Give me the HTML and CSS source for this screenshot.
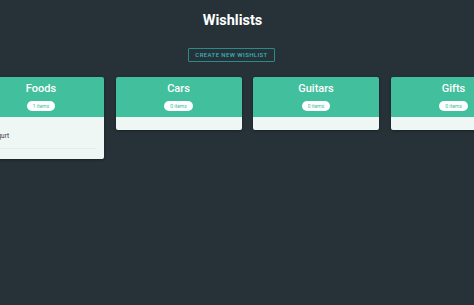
FILE: index.html
```html
<!DOCTYPE html>
<html>
<head>
<meta charset="utf-8">
<link rel="stylesheet" href="styles.css">
</head>
<body>
<div class="page">
  <h1 class="title">Wishlists</h1>
  <div class="actions"><button class="btn-create">Create new wishlist</button></div>
  <div class="cards">
    <div class="card">
      <div class="card-head">
        <div class="card-title">Foods</div>
        <span class="pill">1 items</span>
      </div>
      <div class="card-body">
        <ul class="items"><li class="item">Yogurt</li></ul>
      </div>
    </div>
    <div class="card">
      <div class="card-head">
        <div class="card-title">Cars</div>
        <span class="pill">0 items</span>
      </div>
      <div class="card-body"></div>
    </div>
    <div class="card">
      <div class="card-head">
        <div class="card-title">Guitars</div>
        <span class="pill">0 items</span>
      </div>
      <div class="card-body"></div>
    </div>
    <div class="card">
      <div class="card-head">
        <div class="card-title">Gifts</div>
        <span class="pill">0 items</span>
      </div>
      <div class="card-body"></div>
    </div>
  </div>
</div>
</body>
</html>
```
FILE: styles.css
```css
html, body {
  margin: 0;
  padding: 0;
  background: #263238;
  font-family: Roboto, "Liberation Sans", sans-serif;
  overflow: hidden;
}
.page {
  width: 474px;
  height: 305px;
  overflow: hidden;
}
.title {
  margin: 0;
  padding: 11px 9px 0 0;
  text-align: center;
  color: #ffffff;
  font-size: 14.5px;
  line-height: 19px;
  font-weight: 700;
}
.actions {
  display: flex;
  justify-content: center;
  margin-top: 18px;
  padding-right: 11px;
}
.btn-create {
  width: 87px;
  height: 14px;
  padding: 0;
  background: transparent;
  border: 1px solid #2a8c88;
  border-radius: 1px;
  color: #37b3bf;
  font-family: Roboto, "Liberation Sans", sans-serif;
  font-size: 6px;
  font-weight: 500;
  letter-spacing: 0.4px;
  text-transform: uppercase;
  line-height: 12px;
}
.cards {
  display: flex;
  align-items: flex-start;
  gap: 11.5px;
  margin-top: 15px;
  margin-left: -22px;
}
.card {
  flex: 0 0 126px;
  width: 126px;
  border-radius: 2px;
  overflow: hidden;
  box-shadow: 0 1px 3px rgba(0,0,0,0.35);
}
.card-head {
  background: #42bf9c;
  display: flex;
  flex-direction: column;
  align-items: center;
  padding: 5px 0 6px;
  height: 40px;
  box-sizing: border-box;
}
.card-title {
  color: #ffffff;
  font-size: 11px;
  font-weight: 500;
  line-height: 14px;
}
.pill {
  margin-top: 5px;
  background: #ffffff;
  color: #42bf9c;
  font-size: 5px;
  line-height: 10px;
  height: 10px;
  padding: 0 6px;
  border-radius: 5px;
}
.card-body {
  background: #eef7f3;
  padding: 6px 8px 7px 12px;
}
.items {
  list-style: none;
  margin: 0;
  padding: 0;
}
.item {
  color: #333;
  font-size: 6.5px;
  line-height: 8px;
  padding: 9px 0 8px;
  border-bottom: 1px solid #e2eeea;
  margin-bottom: 3px;
}
```
